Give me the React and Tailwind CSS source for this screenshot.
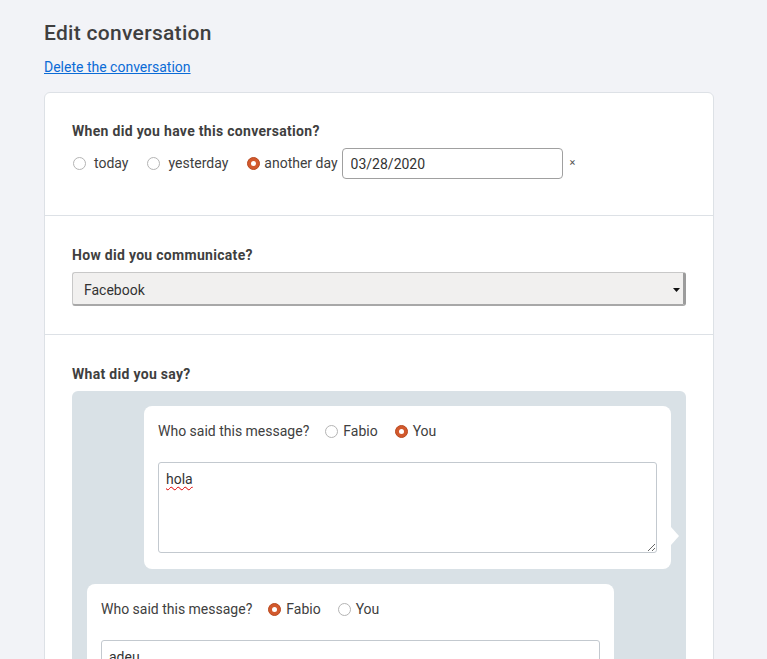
import { useState } from "react";

function Radio({ checked, label, gap = "gap-2" }) {
  return (
    <label className={`flex items-center ${gap} cursor-pointer`}>
      {checked ? (
        <span className="w-[13px] h-[13px] rounded-full bg-[#d2592d] border border-[#b9491f] flex items-center justify-center shrink-0">
          <span className="w-[5px] h-[5px] rounded-full bg-white" />
        </span>
      ) : (
        <span className="w-[13px] h-[13px] rounded-full bg-white border border-[#b4b4b4] shrink-0" />
      )}
      <span>{label}</span>
    </label>
  );
}

function Bubble({ side, who, text, underline }) {
  const isRight = side === "right";
  return (
    <div
      className={`relative w-[527px] bg-white rounded-lg pt-[15px] pb-[16px] px-[14px] ${
        isRight ? "ml-auto" : ""
      }`}
    >
      <div className="flex items-center h-5">
        <span>Who said this message?</span>
        <div className="flex items-center gap-[17px] ml-[16px]">
          <Radio checked={who === "Fabio"} label="Fabio" gap="gap-[5px]" />
          <Radio checked={who === "You"} label="You" gap="gap-[5px]" />
        </div>
      </div>
      <div className="relative mt-[21px]">
        <textarea
          defaultValue={text}
          spellCheck={false}
          className="block w-full h-[91px] border border-[#c3c9cf] rounded-[3px] px-[7px] py-[6px] text-[14px] text-[#333] outline-none resize-y bg-white"
        />
        {underline && (
          <span className="absolute left-[8px] top-[7px] text-[14px] text-transparent underline decoration-wavy decoration-[#d00] decoration-1 underline-offset-2 pointer-events-none">
            {text}
          </span>
        )}
      </div>
      {isRight ? (
        <span className="absolute -right-[8px] top-[121px] w-0 h-0 border-y-[9px] border-y-transparent border-l-[8px] border-l-white" />
      ) : (
        <span className="absolute -left-[8px] top-[121px] w-0 h-0 border-y-[9px] border-y-transparent border-r-[8px] border-r-white" />
      )}
    </div>
  );
}

export default function App() {
  const [when] = useState("another");

  return (
    <div
      className="min-h-screen bg-[#f2f3f7] text-[14px] text-[#404040] px-[44px] pt-[20px]"
      style={{ fontFamily: "Roboto, 'Noto Sans', sans-serif" }}
    >
      <h1 className="text-[21px] font-medium tracking-[0.3px] text-[#3f3f3f] leading-[26px]">
        Edit conversation
      </h1>
      <a href="#" className="inline-block mt-[11px] text-[#0b6bd6] underline leading-[20px]">
        Delete the conversation
      </a>

      <div className="mt-[14px] w-[670px] bg-white border border-[#dde1e6] rounded-md">
        <section className="px-[27px] pt-[28px] pb-[36px] border-b border-[#dde1e6]">
          <h2 className="font-bold leading-5 tracking-[0.3px] text-[#3f3f3f]">
            When did you have this conversation?
          </h2>
          <div className="flex items-center mt-[7px]">
            <div className="ml-px">
              <Radio checked={when === "today"} label="today" />
            </div>
            <div className="ml-[19px]">
              <Radio checked={when === "yesterday"} label="yesterday" />
            </div>
            <div className="ml-[19px]">
              <Radio checked={when === "another"} label="another day" gap="gap-[4px]" />
            </div>
            <input
              defaultValue="03/28/2020"
              className="ml-[4px] w-[221px] h-[31px] border border-[#a0a0a0] rounded-[4px] px-[8px] text-[14px] text-[#333] outline-none"
            />
            <span className="ml-[7px] text-[11px] text-[#555]">×</span>
          </div>
        </section>

        <section className="px-[27px] pt-[29px] pb-[28px] border-b border-[#dde1e6]">
          <h2 className="font-bold leading-5 tracking-[0.3px] text-[#3f3f3f]">How did you communicate?</h2>
          <div className="mt-[7px] h-[34px] bg-[#f1f0ef] border border-[#c8c8c8] border-r-[3px] border-r-[#9c9c9c] border-b-2 border-b-[#a8a8a8] rounded-[3px] flex items-center justify-between pl-[11px] pr-[3px] pt-[3px] text-[#333]">
            <span>Facebook</span>
            <svg width="7" height="4" viewBox="0 0 7 4">
              <path d="M0 0h7L3.5 4z" fill="#111" />
            </svg>
          </div>
        </section>

        <section className="px-[27px] pt-[29px] pb-[30px]">
          <h2 className="font-bold leading-5 tracking-[0.3px] text-[#3f3f3f]">What did you say?</h2>
          <div className="mt-[7px] bg-[#d9e1e6] rounded-md p-[15px] flex flex-col gap-[15px]">
            <Bubble side="right" who="You" text="hola" underline />
            <Bubble side="left" who="Fabio" text="adeu" />
          </div>
        </section>
      </div>
    </div>
  );
}
